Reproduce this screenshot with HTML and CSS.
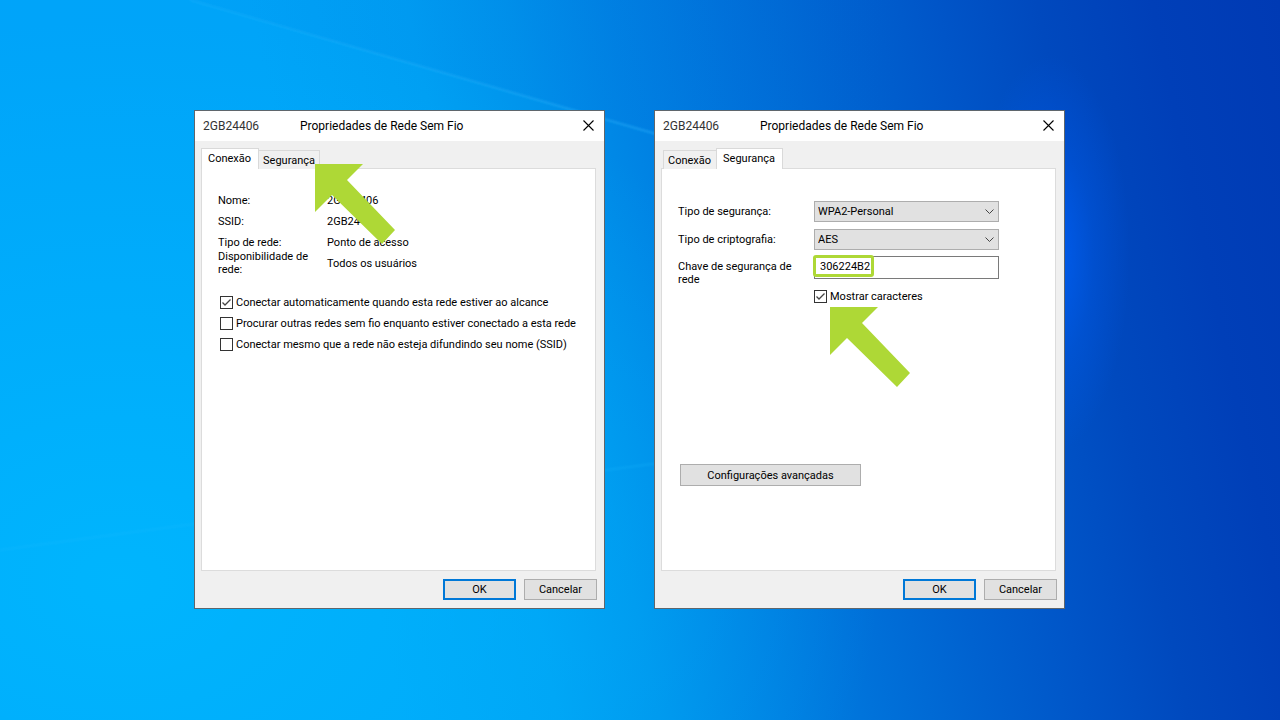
FILE: index.html
```html
<!DOCTYPE html>
<html lang="pt-BR">
<head>
<meta charset="utf-8">
<title>Propriedades de Rede Sem Fio</title>
<link rel="stylesheet" href="styles.css">
</head>
<body>
<main class="desktop">
  <svg class="wallpaper" viewBox="0 0 1280 720" preserveAspectRatio="none" aria-hidden="true">
    <defs>
      <filter id="soft"><feGaussianBlur stdDeviation="1"/></filter>
      <linearGradient id="ray" x1="0" x2="1" y1="0" y2="0">
        <stop offset="0" stop-color="#3bc0ff" stop-opacity=".2"/>
        <stop offset="1" stop-color="#30b8ff" stop-opacity=".45"/>
      </linearGradient>
      <linearGradient id="shade" x1="0" x2="1" y1="0" y2="0">
        <stop offset="0" stop-color="#0068d8" stop-opacity=".04"/>
        <stop offset=".6" stop-color="#0068d8" stop-opacity=".14"/>
        <stop offset="1" stop-color="#0068d8" stop-opacity="0"/>
      </linearGradient>
    </defs>
    <path d="M190 0L660 135L900 200V0Z" fill="url(#shade)"/>
    <path d="M190 0L660 135" stroke="url(#ray)" stroke-width="2" filter="url(#soft)"/>
    <path d="M0 550L194 524L660 463" stroke="#20bcff" stroke-width="2" opacity=".25" fill="none" filter="url(#soft)"/>
  </svg>

  <section class="dialog" aria-label="Propriedades de Rede Sem Fio, Conexão">
    <header class="titlebar">
      <span class="network">2GB24406</span>
      <h1 class="title">Propriedades de Rede Sem Fio</h1>
      <button class="close" type="button" aria-label="Fechar"><svg width="11" height="11" viewBox="0 0 11 11"><path d="M.5.5l10 10M10.500.5l-10 10" stroke="#000" stroke-width="1.100"/></svg></button>
    </header>
    <div class="content">
      <div class="tabs" role="tablist">
        <button class="tab active" type="button" role="tab" aria-selected="true">Conexão</button>
        <button class="tab" type="button" role="tab" aria-selected="false">Segurança</button>
      </div>
      <div class="panel connection" role="tabpanel">
        <dl class="details">
          <dt>Nome:</dt><dd>2GB24406</dd>
          <dt>SSID:</dt><dd>2GB24406</dd>
          <dt>Tipo de rede:</dt><dd>Ponto de acesso</dd>
          <dt>Disponibilidade de rede:</dt><dd>Todos os usuários</dd>
        </dl>
        <div class="options">
          <label class="check"><input type="checkbox" checked>Conectar automaticamente quando esta rede estiver ao alcance</label>
          <label class="check"><input type="checkbox">Procurar outras redes sem fio enquanto estiver conectado a esta rede</label>
          <label class="check"><input type="checkbox">Conectar mesmo que a rede não esteja difundindo seu nome (SSID)</label>
        </div>
      </div>
    </div>
    <footer class="actions">
      <button class="button primary" type="button">OK</button>
      <button class="button" type="button">Cancelar</button>
    </footer>
    <svg class="arrow arrow-tab" viewBox="0 0 80 80" aria-hidden="true"><path d="M0 0H48L32 16L80 66L67 80L17 31L0 48Z" fill="#aed836"/></svg>
  </section>

  <section class="dialog" aria-label="Propriedades de Rede Sem Fio, Segurança">
    <header class="titlebar">
      <span class="network">2GB24406</span>
      <h1 class="title">Propriedades de Rede Sem Fio</h1>
      <button class="close" type="button" aria-label="Fechar"><svg width="11" height="11" viewBox="0 0 11 11"><path d="M.5.5l10 10M10.500.5l-10 10" stroke="#000" stroke-width="1.100"/></svg></button>
    </header>
    <div class="content">
      <div class="tabs" role="tablist">
        <button class="tab" type="button" role="tab" aria-selected="false">Conexão</button>
        <button class="tab active" type="button" role="tab" aria-selected="true">Segurança</button>
      </div>
      <div class="panel security" role="tabpanel">
        <div class="form">
          <label for="sec">Tipo de segurança:</label>
          <select id="sec"><option>WPA2-Personal</option></select>
          <label for="enc">Tipo de criptografia:</label>
          <select id="enc"><option>AES</option></select>
          <label for="key">Chave de segurança de rede</label>
          <div class="key"><input id="key" type="text" value="306224B2"><span class="highlight"></span></div>
          <label class="check show"><input type="checkbox" checked>Mostrar caracteres</label>
        </div>
        <button class="button advanced" type="button">Configurações avançadas</button>
      </div>
    </div>
    <footer class="actions">
      <button class="button primary" type="button">OK</button>
      <button class="button" type="button">Cancelar</button>
    </footer>
    <svg class="arrow arrow-check" viewBox="0 0 80 80" aria-hidden="true"><path d="M0 0H48L32 16L80 66L67 80L17 31L0 48Z" fill="#aed836"/></svg>
  </section>
</main>
</body>
</html>
```
FILE: styles.css
```css
* { box-sizing: border-box; }

body {
  margin: 0;
  font: 11px/13px Roboto, sans-serif;
  color: #000;
}

button, input, select { font: inherit; color: inherit; margin: 0; }

.desktop {
  position: relative;
  display: flex;
  flex-wrap: wrap;
  justify-content: center;
  align-content: center;
  gap: 49px;
  min-height: 100vh;
  padding: 24px 21px 26px 0;
  overflow: hidden;
  background:
    radial-gradient(ellipse 80px 200px at 1050px 255px, rgba(0, 98, 255, .75), rgba(0, 98, 255, .25) 55%, rgba(0, 98, 255, 0)),
    radial-gradient(ellipse 760px 560px at 120px 580px, rgba(0, 188, 255, .7), rgba(0, 188, 255, 0)),
    linear-gradient(78deg, #00a4fa 0%, #00a4f8 28%, #009ff3 39%, #0094ec 46%, #0084e4 53%, #0072da 61%, #0062d0 69%, #0055c8 76%, #0049be 83%, #003fb8 91%, #003ab4 100%);
}

.wallpaper { position: absolute; inset: 0; width: 100%; height: 100%; }

.dialog {
  position: relative;
  display: flex;
  flex-direction: column;
  width: 411px;
  min-height: 499px;
  border: 1px solid #5f666c;
  background: #f0f0f0;
}

.titlebar {
  display: flex;
  align-items: center;
  height: 30px;
  padding: 0 10px 0 8px;
  background: #fff;
  font-size: 12px;
  line-height: 14px;
}
.network { width: 97px; padding-top: 1px; color: #333; }
.title { flex: 1; margin: 0; padding-top: 1px; font: inherit; }
.close { display: flex; padding: 0; border: 0; background: none; }

.content { flex: 1; display: flex; flex-direction: column; padding: 7px 8px 0 6px; }

.tabs { display: flex; align-items: flex-end; height: 21px; padding: 0 2px; z-index: 1; }
.tab {
  height: 19px;
  padding: 1px 4px 0;
  border: 1px solid #d9d9d9;
  border-bottom: 0;
  background: #f0f0f0;
  white-space: nowrap;
}
.tab.active {
  height: 21px;
  padding: 0 7px 1px 6px;
  background: #fff;
}
.tab.active:first-child { margin-left: -2px; }
.tab.active + .tab { border-left: 0; }
.tab:has(+ .active) { border-right: 0; padding-right: 5px; }

.panel {
  flex: 1;
  display: flex;
  flex-direction: column;
  align-items: flex-start;
  margin-top: -1px;
  border: 1px solid #dcdcdc;
  background: #fff;
}
.connection { padding: 21px 16px; }
.security { padding: 32px 16px; }

.details {
  display: grid;
  grid-template-columns: 109px auto;
  grid-auto-rows: 21px;
  align-items: center;
  margin: 0;
}
.details dt, .details dd { margin: 0; }

.options { display: grid; grid-auto-rows: 21px; margin-top: 18px; padding-left: 2px; }

.check { display: flex; align-items: center; gap: 3px; white-space: nowrap; }
.check input {
  appearance: none;
  width: 13px;
  height: 13px;
  border: 1px solid #333;
  background: #fff;
}
.check input:checked {
  background: url("data:image/svg+xml,%3Csvg xmlns='http://www.w3.org/2000/svg' viewBox='0 0 11 11'%3E%3Cpath d='M1.500 5.500L4 8L9.500 2.500' fill='none' stroke='%23444' stroke-width='1.300'/%3E%3C/svg%3E");
}

.form {
  display: grid;
  grid-template-columns: 136px 185px;
  grid-template-rows: 21px 21px 24px 17px;
  row-gap: 7px;
  align-items: center;
}
.form select {
  appearance: none;
  width: 100%;
  height: 21px;
  padding: 1px 3px 0;
  border: 1px solid #adadad;
  border-radius: 0;
  background: #e1e1e1 url("data:image/svg+xml,%3Csvg xmlns='http://www.w3.org/2000/svg' width='9' height='5' viewBox='0 0 9 5'%3E%3Cpath d='M.5.5L4.500 4.500L8.500.5' fill='none' stroke='%23444'/%3E%3C/svg%3E") no-repeat right 4px center;
}
.form label[for="key"] { padding-top: 8px; }
.key { position: relative; height: 26px; }
.key input {
  width: 100%;
  height: 23px;
  padding: 0 5px 2px;
  border: 1px solid #7a7a7a;
  background: #fff;
}
.highlight {
  position: absolute;
  top: -1px;
  left: -1px;
  width: 61px;
  height: 22px;
  border: 3px solid #aed836;
  border-radius: 3px;
}
.show { grid-column: 2; }

.button {
  height: 22px;
  padding: 1px 4px 0;
  border: 1px solid #adadad;
  background: #e1e1e1;
}
.button.primary { border: 2px solid #0078d7; }
.advanced { width: 181px; margin: 159px 0 0 2px; }

.actions { display: flex; justify-content: flex-end; gap: 8px; padding: 8px 7px; }
.actions .button { width: 73px; height: 21px; }

.arrow { position: absolute; width: 80px; height: 80px; z-index: 2; }
.arrow-tab { top: 53px; left: 120px; }
.arrow-check { top: 196px; left: 175px; }
```
